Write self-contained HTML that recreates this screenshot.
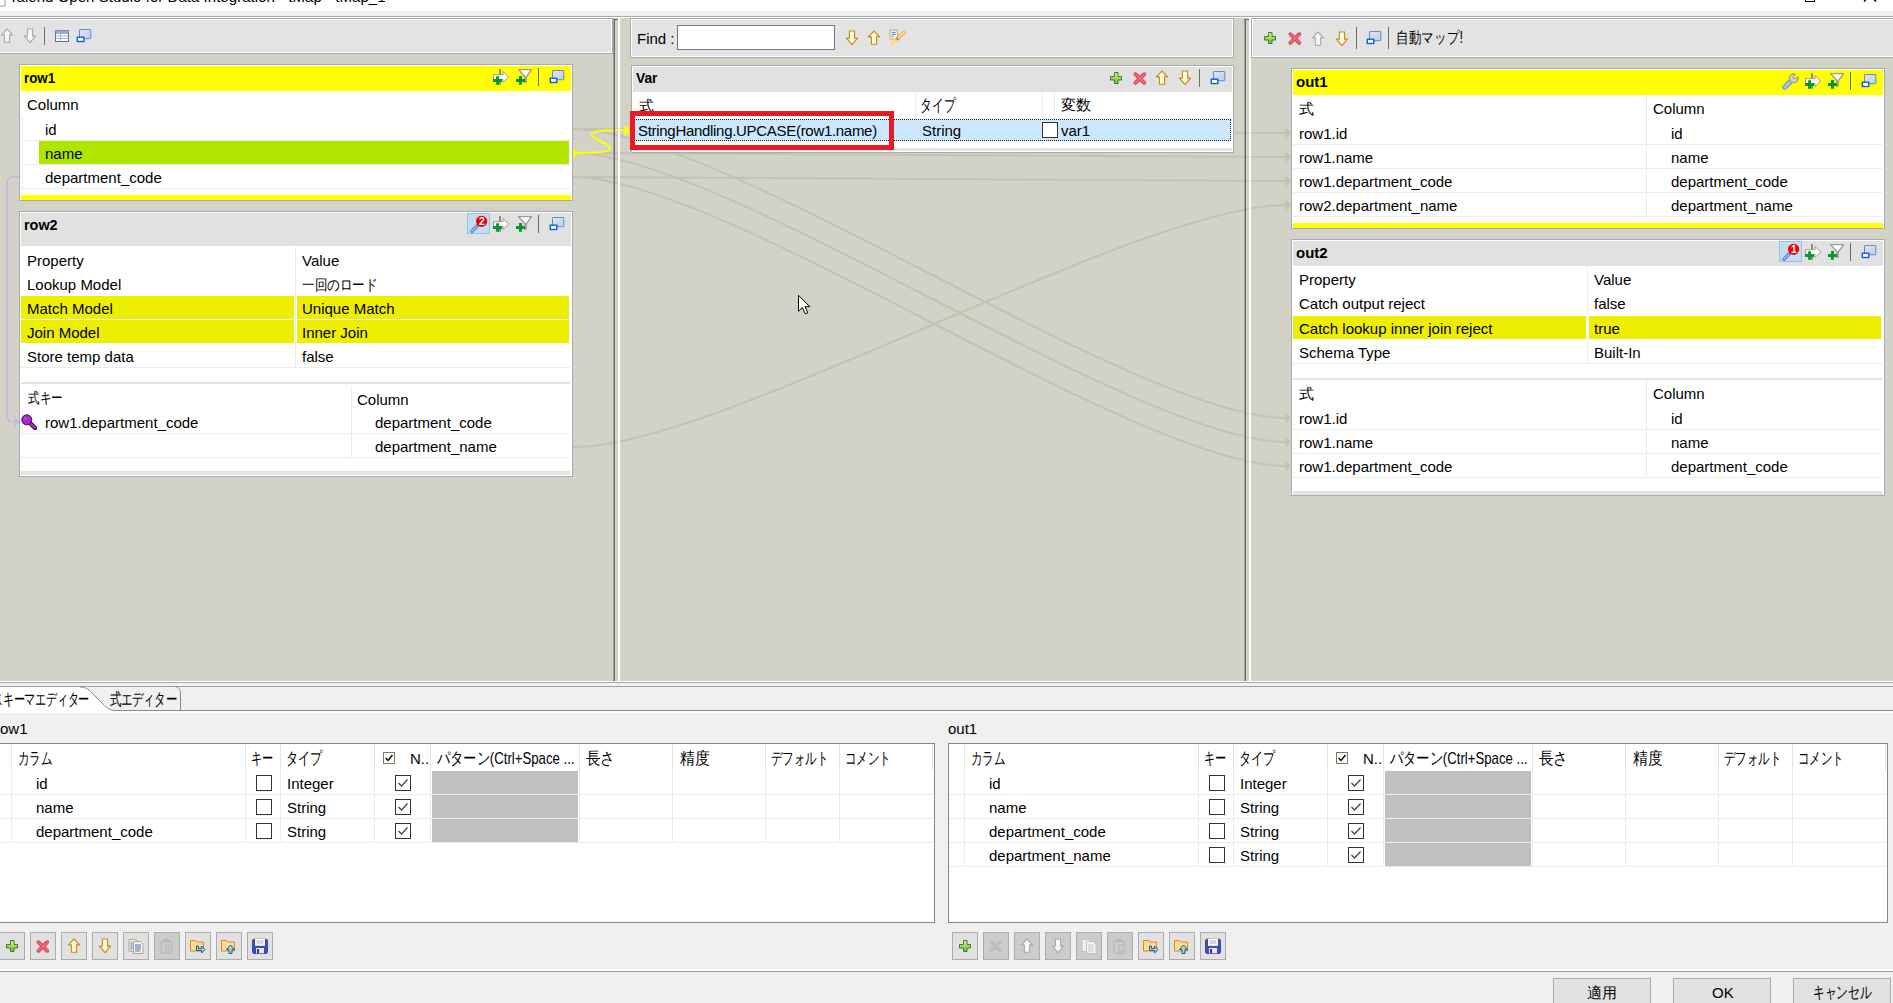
<!DOCTYPE html>
<html><head><meta charset="utf-8"><title>tMap</title>
<style>
html,body{margin:0;padding:0;}
body{width:1893px;height:1003px;overflow:hidden;position:relative;background:#f0f0f0;font-family:"Liberation Sans",sans-serif;}
.a{position:absolute;}
.t{position:absolute;white-space:nowrap;font-size:15px;line-height:24px;font-family:"Liberation Sans",sans-serif;}
svg.a{overflow:visible;}
</style></head><body>
<svg width="0" height="0" style="position:absolute"><defs><linearGradient id="gm" x1="0" y1="0" x2="1" y2="1"><stop offset="0" stop-color="#e6e6e6"/><stop offset="1" stop-color="#bcd0e8"/></linearGradient><linearGradient id="gp" x1="0" y1="0" x2="0" y2="1"><stop offset="0" stop-color="#eef070"/><stop offset="1" stop-color="#7cb640"/></linearGradient><linearGradient id="ga" x1="0" y1="0" x2="1" y2="0"><stop offset="0" stop-color="#fff6d0"/><stop offset="0.5" stop-color="#fffbe8"/><stop offset="1" stop-color="#f8dc90"/></linearGradient></defs></svg>
<div class="a" style="left:0px;top:0px;width:1893px;height:11px;background:#fff;"></div>
<div class="t" style="left:9px;top:-15px;color:#000;letter-spacing:0.04px;">Talend Open Studio for Data Integration - tMap - tMap_1</div>
<svg class="a" style="left:0px;top:0px" width="6" height="7" viewBox="0 0 6 7"><rect x="-2" y="-4" width="7" height="10" fill="#fff" stroke="#8aa0c8"/></svg>
<div class="a" style="left:1805px;top:-9px;width:8px;height:9px;background:transparent;border:1.5px solid #000;"></div>
<svg class="a" style="left:1862px;top:0px" width="16" height="6" viewBox="0 0 16 6"><path d="M2 -10.5 L14 1.5 M14 -10.5 L2 1.5" stroke="#000" stroke-width="1.4"/></svg>
<div class="a" style="left:0px;top:16px;width:1893px;height:1px;background:#a9abb0;"></div>
<div class="a" style="left:0px;top:17px;width:1893px;height:1px;background:#fff;"></div>
<div class="a" style="left:0px;top:18px;width:1893px;height:663px;background:#d2d2c6;"></div>
<svg class="a" style="left:0;top:0" width="1893" height="681" viewBox="0 0 1893 681"><path d="M573 129 C723 129 1136 133 1286 133" fill="none" stroke="#c3c3b4" stroke-width="2"/><path d="M1285.5 127.5 L1291.5 133 L1285.5 138.5 z" fill="#c3c3b4"/><path d="M573 153 C723 153 1136 157 1286 157" fill="none" stroke="#c3c3b4" stroke-width="2"/><path d="M1285.5 151.5 L1291.5 157 L1285.5 162.5 z" fill="#c3c3b4"/><path d="M573 177 C723 177 1136 181 1286 181" fill="none" stroke="#c3c3b4" stroke-width="2"/><path d="M1285.5 175.5 L1291.5 181 L1285.5 186.5 z" fill="#c3c3b4"/><path d="M573 129 C723 129 1136 418 1286 418" fill="none" stroke="#c3c3b4" stroke-width="2"/><path d="M1285.5 412.5 L1291.5 418 L1285.5 423.5 z" fill="#c3c3b4"/><path d="M573 153 C723 153 1136 442 1286 442" fill="none" stroke="#c3c3b4" stroke-width="2"/><path d="M1285.5 436.5 L1291.5 442 L1285.5 447.5 z" fill="#c3c3b4"/><path d="M573 177 C723 177 1136 466 1286 466" fill="none" stroke="#c3c3b4" stroke-width="2"/><path d="M1285.5 460.5 L1291.5 466 L1285.5 471.5 z" fill="#c3c3b4"/><path d="M573 447 C723 447 1136 205 1286 205" fill="none" stroke="#c3c3b4" stroke-width="2"/><path d="M1285.5 199.5 L1291.5 205 L1285.5 210.5 z" fill="#c3c3b4"/><path d="M577 153 C668 153 534 130 625 130" fill="none" stroke="#ffff00" stroke-width="2"/><path d="M624.5 125 L631 130.5 L624.5 136 z" fill="#ffff00"/><path d="M572.5 147.5 L578.8 153 L572.5 158.5 z" fill="#ffff00"/><path d="M19 177 H13.5 Q7 177 7 183.5 V415.5 Q7 422 13.5 422 H15" fill="none" stroke="#c8b8e4" stroke-width="2"/><path d="M14 416 L19.5 422 L14 428 z" fill="#c8b8e4"/></svg>
<div class="a" style="left:-2px;top:18px;width:613px;height:34px;border:1px solid #a9abb0;background:#e3e3e3;box-shadow:inset 0 0 0 1px #fff;"></div>
<div class="a" style="left:613px;top:18px;width:1px;height:663px;background:#a0a0a0;"></div>
<div class="a" style="left:614px;top:19px;width:1px;height:662px;background:#696969;"></div>
<div class="a" style="left:614px;top:19px;width:5px;height:1px;background:#696969;"></div>
<div class="a" style="left:618px;top:18px;width:2px;height:663px;background:#fff;"></div>
<div class="a" style="left:630px;top:18px;width:602px;height:38px;border:1px solid #a9abb0;background:#e3e3e3;box-shadow:inset 0 0 0 1px #fff;"></div>
<div class="a" style="left:1244px;top:18px;width:1px;height:663px;background:#a0a0a0;"></div>
<div class="a" style="left:1245px;top:19px;width:1px;height:662px;background:#696969;"></div>
<div class="a" style="left:1245px;top:19px;width:5px;height:1px;background:#696969;"></div>
<div class="a" style="left:1249px;top:18px;width:2px;height:663px;background:#fff;"></div>
<div class="a" style="left:1251px;top:18px;width:648px;height:38px;border:1px solid #a9abb0;background:#e3e3e3;box-shadow:inset 0 0 0 1px #fff;"></div>
<svg class="a" style="left:0px;top:28px" width="14" height="16" viewBox="0 0 14 16"><path d="M7 1 L12.6 6.9 H9.6 V14.3 H4.4 V6.9 H1.4 Z" fill="#f6f6f6" stroke="#a9a9a9" stroke-width="1.1" stroke-linejoin="round"/></svg>
<svg class="a" style="left:23px;top:28px" width="14" height="16" viewBox="0 0 14 16"><path d="M7 14.6 L12.6 8.1 H9.6 V1 H4.4 V8.1 H1.4 Z" fill="#f6f6f6" stroke="#a9a9a9" stroke-width="1.1" stroke-linejoin="round"/></svg>
<div class="a" style="left:44px;top:27px;width:1px;height:18px;background:#707070;"></div>
<svg class="a" style="left:55px;top:30px" width="14" height="12" viewBox="0 0 14 12"><rect x="0.5" y="0.5" width="13" height="11" fill="#fff" stroke="#5a6fa0"/><path d="M0.5 3.5 h13 M0.5 6 h13 M0.5 8.5 h13 M5.5 0.5 v11" stroke="#8ea0c8" stroke-width="0.8"/><rect x="0.5" y="0.5" width="13" height="2.5" fill="#9aaad0"/></svg>
<svg class="a" style="left:76px;top:28px" width="16" height="15" viewBox="0 0 16 15"><rect x="3.5" y="1.5" width="11.3" height="9.2" rx="0.6" fill="url(#gm)" stroke="#5b8bd9" stroke-width="1"/><rect x="1.3" y="9.2" width="6.5" height="4.3" fill="#fff" stroke="#0a5ee0" stroke-width="1.4"/></svg>
<div class="t" style="left:637px;top:27px;color:#000;">Find :</div>
<div class="a" style="left:677px;top:25px;width:158px;height:25px;background:#fff;box-sizing:border-box;border:1px solid #7a7a7a;"></div>
<svg class="a" style="left:845px;top:30px" width="14" height="16" viewBox="0 0 14 16"><path d="M7 14.6 L12.6 8.1 H9.6 V1 H4.4 V8.1 H1.4 Z" fill="url(#ga)" stroke="#c98a12" stroke-width="1.1" stroke-linejoin="round"/></svg>
<svg class="a" style="left:867px;top:30px" width="14" height="16" viewBox="0 0 14 16"><path d="M7 1 L12.6 6.9 H9.6 V14.3 H4.4 V6.9 H1.4 Z" fill="url(#ga)" stroke="#c98a12" stroke-width="1.1" stroke-linejoin="round"/></svg>
<svg class="a" style="left:889px;top:29px" width="17" height="17" viewBox="0 0 17 17"><rect x="1" y="1" width="7.5" height="9" fill="#f4f6fc" stroke="#b8ac78" stroke-width="1"/><path d="M2.6 3.4 h4 M2.6 5.4 h4 M2.6 7.4 h2" stroke="#5a78b8" stroke-width="1"/><path d="M2 15.5 L7.5 10.5" stroke="#f8e070" stroke-width="3.6" stroke-linecap="butt"/><path d="M7.5 10.5 L9.8 8.4" stroke="#9a8c88" stroke-width="3.6"/><path d="M9.8 8.4 L15 3.6" stroke="#f4b040" stroke-width="3.6" stroke-linecap="round"/><path d="M9.8 8.4 L15 3.6" stroke="#ffe8a0" stroke-width="1.4" stroke-linecap="round"/></svg>
<svg class="a" style="left:1264px;top:32px" width="13" height="13" viewBox="0 0 13 13"><path d="M4.5 0.5 H8 V4.5 H11.5 V8 H8 V11.5 H4.5 V8 H0.5 V4.5 H4.5 Z" fill="url(#gp)" stroke="#2f8040" stroke-width="1"/></svg>
<svg class="a" style="left:1288px;top:32px" width="14" height="13" viewBox="0 0 14 13"><path d="M2.4 2.2 L11.2 10.8 M11.2 2.2 L2.4 10.8" stroke="#d8404e" stroke-width="3.8" stroke-linecap="round"/><path d="M2.4 2.2 L11.2 10.8 M11.2 2.2 L2.4 10.8" stroke="#f26874" stroke-width="2" stroke-linecap="round"/></svg>
<svg class="a" style="left:1311px;top:31px" width="14" height="16" viewBox="0 0 14 16"><path d="M7 1 L12.6 6.9 H9.6 V14.3 H4.4 V6.9 H1.4 Z" fill="#f6f6f6" stroke="#a9a9a9" stroke-width="1.1" stroke-linejoin="round"/></svg>
<svg class="a" style="left:1335px;top:31px" width="14" height="16" viewBox="0 0 14 16"><path d="M7 14.6 L12.6 8.1 H9.6 V1 H4.4 V8.1 H1.4 Z" fill="url(#ga)" stroke="#c98a12" stroke-width="1.1" stroke-linejoin="round"/></svg>
<div class="a" style="left:1356px;top:27px;width:1px;height:22px;background:#6a6a6a;"></div>
<svg class="a" style="left:1366px;top:30px" width="16" height="15" viewBox="0 0 16 15"><rect x="3.5" y="1.5" width="11.3" height="9.2" rx="0.6" fill="url(#gm)" stroke="#5b8bd9" stroke-width="1"/><rect x="1.3" y="9.2" width="6.5" height="4.3" fill="#fff" stroke="#0a5ee0" stroke-width="1.4"/></svg>
<div class="a" style="left:1388px;top:27px;width:1px;height:22px;background:#6a6a6a;"></div>
<div class="t" style="left:1396px;top:26px;color:#000;transform:scale(0.845,1.08);transform-origin:0 18px;">自動マップ!</div>
<div class="a" style="left:19px;top:64px;width:552px;height:135px;border:1px solid #a9abb0;background:#fff;box-shadow:inset 0 0 0 1px #fff;"></div>
<div class="a" style="left:21px;top:66px;width:550px;height:25px;background:#ffff00;"></div>
<div class="t" style="left:24px;top:66px;font-weight:bold;color:#000;transform:scale(0.89,1);transform-origin:0 18px;">row1</div>
<svg class="a" style="left:492px;top:68px" width="18" height="18" viewBox="0 0 18 18"><rect x="7" y="1" width="2" height="15.5" fill="#8c8c8c"/><path d="M1.5 6.7 H11 V3.5 L16.8 9 L11 14.5 V11.5 H1.5 Z" fill="#fff" stroke="#a39c82" stroke-width="1"/><rect x="7" y="12" width="2" height="4.5" fill="#8c8c8c"/><path d="M4.1 8.2 H7 V11.1 H10 V14 H7 V16.8 H4.1 V14 H1 V11.1 H4.1 Z" fill="#07962f"/></svg>
<svg class="a" style="left:515px;top:68px" width="18" height="18" viewBox="0 0 18 18"><path d="M3.6 1.6 H16.6 L11.2 9 V14.4 H10.1 V9 Z" fill="#fff" stroke="#9a9a9a" stroke-width="1.3" stroke-linejoin="round"/><path d="M4 8.1 H7 V11.1 H10 V14 H7 V16.8 H4 V14 H1 V11.1 H4 Z" fill="#07962f"/></svg>
<div class="a" style="left:538px;top:68px;width:1px;height:18px;background:#6c6c3c;"></div>
<svg class="a" style="left:549px;top:69px" width="16" height="15" viewBox="0 0 16 15"><rect x="3.5" y="1.5" width="11.3" height="9.2" rx="0.6" fill="url(#gm)" stroke="#5b8bd9" stroke-width="1"/><rect x="1.3" y="9.2" width="6.5" height="4.3" fill="#fff" stroke="#0a5ee0" stroke-width="1.4"/></svg>
<div class="t" style="left:27px;top:93px;color:#000;">Column</div>
<div class="a" style="left:22px;top:117px;width:1px;height:72px;background:#e6eef8;"></div>
<div class="a" style="left:21px;top:140px;width:549px;height:1px;background:#ececec;"></div>
<div class="t" style="left:45px;top:118px;color:#000;">id</div>
<div class="a" style="left:39px;top:141px;width:530px;height:23px;background:#aee600;"></div>
<div class="a" style="left:21px;top:164px;width:549px;height:1px;background:#ececec;"></div>
<div class="t" style="left:45px;top:142px;color:#000;">name</div>
<div class="a" style="left:21px;top:188px;width:549px;height:1px;background:#ececec;"></div>
<div class="t" style="left:45px;top:166px;color:#000;">department_code</div>
<div class="a" style="left:21px;top:195px;width:550px;height:5px;background:#ffff00;"></div>
<div class="a" style="left:19px;top:211px;width:552px;height:264px;border:1px solid #a9abb0;background:#fff;box-shadow:inset 0 0 0 1px #fff;"></div>
<div class="a" style="left:21px;top:213px;width:550px;height:33px;background:#e1e1e1;"></div>
<div class="t" style="left:24px;top:213px;font-weight:bold;color:#000;transform:scale(0.96,1);transform-origin:0 18px;">row2</div>
<svg class="a" style="left:467px;top:213px" width="23" height="21" viewBox="0 0 23 21"><rect x="0.5" y="0.5" width="22" height="20" fill="#c5dcf0" stroke="#8cc4f2"/><path d="M5 6 v8 M9 5 v9" stroke="#b8d0e4" stroke-width="1" stroke-dasharray="1 1"/><path d="M5 18.2 L10.5 12.5" stroke="#5d84d6" stroke-width="3.4" stroke-linecap="round"/><path d="M5 18.2 L10.5 12.5" stroke="#a9c2ee" stroke-width="1.2" stroke-dasharray="1 1" stroke-linecap="round"/><circle cx="14.6" cy="8.3" r="5.6" fill="#f00000"/><text x="14.8" y="12.2" font-family="Liberation Sans" font-weight="bold" font-size="10.5" fill="#fff" text-anchor="middle">2</text></svg>
<svg class="a" style="left:492px;top:215px" width="18" height="18" viewBox="0 0 18 18"><rect x="7" y="1" width="2" height="15.5" fill="#8c8c8c"/><path d="M1.5 6.7 H11 V3.5 L16.8 9 L11 14.5 V11.5 H1.5 Z" fill="#fff" stroke="#a39c82" stroke-width="1"/><rect x="7" y="12" width="2" height="4.5" fill="#8c8c8c"/><path d="M4.1 8.2 H7 V11.1 H10 V14 H7 V16.8 H4.1 V14 H1 V11.1 H4.1 Z" fill="#07962f"/></svg>
<svg class="a" style="left:515px;top:215px" width="18" height="18" viewBox="0 0 18 18"><path d="M3.6 1.6 H16.6 L11.2 9 V14.4 H10.1 V9 Z" fill="#fff" stroke="#9a9a9a" stroke-width="1.3" stroke-linejoin="round"/><path d="M4 8.1 H7 V11.1 H10 V14 H7 V16.8 H4 V14 H1 V11.1 H4 Z" fill="#07962f"/></svg>
<div class="a" style="left:538px;top:215px;width:1px;height:18px;background:#6a6a6a;"></div>
<svg class="a" style="left:549px;top:216px" width="16" height="15" viewBox="0 0 16 15"><rect x="3.5" y="1.5" width="11.3" height="9.2" rx="0.6" fill="url(#gm)" stroke="#5b8bd9" stroke-width="1"/><rect x="1.3" y="9.2" width="6.5" height="4.3" fill="#fff" stroke="#0a5ee0" stroke-width="1.4"/></svg>
<div class="a" style="left:295px;top:247px;width:1px;height:24px;background:#ececec;"></div>
<div class="t" style="left:27px;top:249px;color:#000;">Property</div>
<div class="t" style="left:302px;top:249px;color:#000;">Value</div>
<div class="a" style="left:295px;top:271px;width:1px;height:24px;background:#e6eef8;"></div>
<div class="t" style="left:27px;top:273px;color:#000;">Lookup Model</div>
<div class="t" style="left:302px;top:273px;color:#000;transform:scale(0.84,1);transform-origin:0 18px;">一回のロード</div>
<div class="a" style="left:21px;top:296px;width:273px;height:23px;background:#eeee00;"></div>
<div class="a" style="left:297px;top:296px;width:272px;height:23px;background:#eeee00;"></div>
<div class="t" style="left:27px;top:297px;color:#000;">Match Model</div>
<div class="t" style="left:302px;top:297px;color:#000;">Unique Match</div>
<div class="a" style="left:21px;top:320px;width:273px;height:23px;background:#eeee00;"></div>
<div class="a" style="left:297px;top:320px;width:272px;height:23px;background:#eeee00;"></div>
<div class="t" style="left:27px;top:321px;color:#000;">Join Model</div>
<div class="t" style="left:302px;top:321px;color:#000;">Inner Join</div>
<div class="a" style="left:295px;top:343px;width:1px;height:24px;background:#e6eef8;"></div>
<div class="t" style="left:27px;top:345px;color:#000;">Store temp data</div>
<div class="t" style="left:302px;top:345px;color:#000;">false</div>
<div class="a" style="left:21px;top:367px;width:549px;height:1px;background:#ececec;"></div>
<div class="a" style="left:295px;top:296px;width:1px;height:47px;background:#e6eef8;"></div>
<div class="a" style="left:21px;top:319px;width:549px;height:1px;background:#ececec;"></div>
<div class="a" style="left:21px;top:382px;width:549px;height:2px;background:#e3e3e3;"></div>
<div class="t" style="left:28px;top:386px;color:#000;transform:scale(0.77,1.0);transform-origin:0 18px;">式キー</div>
<div class="t" style="left:357px;top:388px;color:#000;">Column</div>
<div class="a" style="left:351px;top:386px;width:1px;height:23px;background:#ececec;"></div>
<div class="a" style="left:22px;top:410px;width:1px;height:23px;background:#e6eef8;"></div>
<div class="a" style="left:351px;top:410px;width:1px;height:47px;background:#e6eef8;"></div>
<svg class="a" style="left:21px;top:414px" width="17" height="17" viewBox="0 0 17 17"><path d="M6.5 6.5 L14 14" stroke="#401038" stroke-width="4.4" stroke-linecap="round"/><path d="M6.5 6.5 L14 14" stroke="#a82ad0" stroke-width="2.4" stroke-linecap="round"/><circle cx="5.8" cy="5.8" r="5" fill="#a82ad0" stroke="#401038" stroke-width="1"/><circle cx="4.5" cy="4.5" r="1" fill="#e070a0"/></svg>
<div class="t" style="left:45px;top:411px;color:#000;">row1.department_code</div>
<div class="t" style="left:375px;top:411px;color:#000;">department_code</div>
<div class="a" style="left:21px;top:433px;width:549px;height:1px;background:#ececec;"></div>
<div class="t" style="left:375px;top:435px;color:#000;">department_name</div>
<div class="a" style="left:21px;top:457px;width:549px;height:1px;background:#ececec;"></div>
<div class="a" style="left:21px;top:471px;width:549px;height:4px;background:#e3e3e3;"></div>
<div class="a" style="left:631px;top:65px;width:601px;height:86px;border:1px solid #a9abb0;background:#fff;box-shadow:inset 0 0 0 1px #fff;"></div>
<div class="a" style="left:633px;top:67px;width:599px;height:25px;background:#e1e1e1;"></div>
<div class="t" style="left:636px;top:66px;font-weight:bold;color:#000;transform:scale(0.92,1);transform-origin:0 18px;">Var</div>
<svg class="a" style="left:1110px;top:72px" width="13" height="13" viewBox="0 0 13 13"><path d="M4.5 0.5 H8 V4.5 H11.5 V8 H8 V11.5 H4.5 V8 H0.5 V4.5 H4.5 Z" fill="url(#gp)" stroke="#2f8040" stroke-width="1"/></svg>
<svg class="a" style="left:1133px;top:72px" width="14" height="13" viewBox="0 0 14 13"><path d="M2.4 2.2 L11.2 10.8 M11.2 2.2 L2.4 10.8" stroke="#d8404e" stroke-width="3.8" stroke-linecap="round"/><path d="M2.4 2.2 L11.2 10.8 M11.2 2.2 L2.4 10.8" stroke="#f26874" stroke-width="2" stroke-linecap="round"/></svg>
<svg class="a" style="left:1155px;top:70px" width="14" height="16" viewBox="0 0 14 16"><path d="M7 1 L12.6 6.9 H9.6 V14.3 H4.4 V6.9 H1.4 Z" fill="url(#ga)" stroke="#c98a12" stroke-width="1.1" stroke-linejoin="round"/></svg>
<svg class="a" style="left:1178px;top:70px" width="14" height="16" viewBox="0 0 14 16"><path d="M7 14.6 L12.6 8.1 H9.6 V1 H4.4 V8.1 H1.4 Z" fill="url(#ga)" stroke="#c98a12" stroke-width="1.1" stroke-linejoin="round"/></svg>
<div class="a" style="left:1199px;top:69px;width:1px;height:18px;background:#6a6a6a;"></div>
<svg class="a" style="left:1210px;top:70px" width="16" height="15" viewBox="0 0 16 15"><rect x="3.5" y="1.5" width="11.3" height="9.2" rx="0.6" fill="url(#gm)" stroke="#5b8bd9" stroke-width="1"/><rect x="1.3" y="9.2" width="6.5" height="4.3" fill="#fff" stroke="#0a5ee0" stroke-width="1.4"/></svg>
<div class="t" style="left:639px;top:94px;color:#000;">式</div>
<div class="t" style="left:920px;top:94px;color:#000;transform:scale(0.8,1.15);transform-origin:0 18px;">タイプ</div>
<div class="t" style="left:1061px;top:93px;color:#000;">変数</div>
<div class="a" style="left:915px;top:92px;width:1px;height:27px;background:#ececec;"></div>
<div class="a" style="left:1042px;top:92px;width:1px;height:27px;background:#ececec;"></div>
<div class="a" style="left:1054px;top:92px;width:1px;height:27px;background:#ececec;"></div>
<div class="a" style="left:633px;top:119px;width:598px;height:22px;background:#cce8ff;"></div>
<div class="a" style="left:633px;top:119px;width:598px;height:22px;background:transparent;box-sizing:border-box;border:1px dotted #222;"></div>
<div class="a" style="left:915px;top:120px;width:1px;height:20px;background:#d8e8f8;"></div>
<svg class="a" style="left:1042px;top:122px" width="16" height="16" viewBox="0 0 16 16"><rect x="0.5" y="0.5" width="15" height="15" fill="#fff" stroke="#333" stroke-width="1"/></svg>
<div class="t" style="left:638px;top:119px;color:#000;letter-spacing:-0.3px;">StringHandling.UPCASE(row1.name)</div>
<div class="t" style="left:922px;top:119px;color:#000;">String</div>
<div class="t" style="left:1061px;top:119px;color:#000;">var1</div>
<div class="a" style="left:633px;top:148px;width:599px;height:3px;background:#e3e3e3;"></div>
<div class="a" style="left:630px;top:111px;width:264px;height:39px;background:transparent;box-sizing:border-box;border:5px solid #e81b24;"></div>
<div class="a" style="left:1291px;top:68px;width:592px;height:159px;border:1px solid #a9abb0;background:#fff;box-shadow:inset 0 0 0 1px #fff;"></div>
<div class="a" style="left:1293px;top:70px;width:590px;height:25px;background:#ffff00;"></div>
<div class="t" style="left:1296px;top:70px;font-weight:bold;color:#000;">out1</div>
<svg class="a" style="left:1782px;top:73px" width="17" height="17" viewBox="0 0 17 17"><path d="M2.8 14.2 L8.6 8.4" stroke="#6a8fd4" stroke-width="5" stroke-linecap="round"/><path d="M2.8 14.2 L8.6 8.4" stroke="#a9c3ee" stroke-width="3" stroke-linecap="round"/><path d="M8.4 9.2 L7.6 6.2 A4.2 4.2 0 0 1 13.4 1.2 L11.2 3.6 L11.6 5.4 L13.4 5.8 L15.8 3.6 A4.2 4.2 0 0 1 10.8 9.4 Z" fill="#d2d2d2" stroke="#8c8c8c" stroke-width="1"/></svg>
<svg class="a" style="left:1804px;top:72px" width="18" height="18" viewBox="0 0 18 18"><rect x="7" y="1" width="2" height="15.5" fill="#8c8c8c"/><path d="M1.5 6.7 H11 V3.5 L16.8 9 L11 14.5 V11.5 H1.5 Z" fill="#fff" stroke="#a39c82" stroke-width="1"/><rect x="7" y="12" width="2" height="4.5" fill="#8c8c8c"/><path d="M4.1 8.2 H7 V11.1 H10 V14 H7 V16.8 H4.1 V14 H1 V11.1 H4.1 Z" fill="#07962f"/></svg>
<svg class="a" style="left:1827px;top:72px" width="18" height="18" viewBox="0 0 18 18"><path d="M3.6 1.6 H16.6 L11.2 9 V14.4 H10.1 V9 Z" fill="#fff" stroke="#9a9a9a" stroke-width="1.3" stroke-linejoin="round"/><path d="M4 8.1 H7 V11.1 H10 V14 H7 V16.8 H4 V14 H1 V11.1 H4 Z" fill="#07962f"/></svg>
<div class="a" style="left:1850px;top:72px;width:1px;height:18px;background:#6c6c3c;"></div>
<svg class="a" style="left:1861px;top:73px" width="16" height="15" viewBox="0 0 16 15"><rect x="3.5" y="1.5" width="11.3" height="9.2" rx="0.6" fill="url(#gm)" stroke="#5b8bd9" stroke-width="1"/><rect x="1.3" y="9.2" width="6.5" height="4.3" fill="#fff" stroke="#0a5ee0" stroke-width="1.4"/></svg>
<div class="t" style="left:1299px;top:97px;color:#000;">式</div>
<div class="t" style="left:1653px;top:97px;color:#000;">Column</div>
<div class="a" style="left:1646px;top:95px;width:1px;height:25px;background:#ececec;"></div>
<div class="t" style="left:1299px;top:122px;color:#000;">row1.id</div>
<div class="t" style="left:1671px;top:122px;color:#000;">id</div>
<div class="a" style="left:1646px;top:120px;width:1px;height:24px;background:#e6eef8;"></div>
<div class="a" style="left:1293px;top:144px;width:589px;height:1px;background:#ececec;"></div>
<div class="t" style="left:1299px;top:146px;color:#000;">row1.name</div>
<div class="t" style="left:1671px;top:146px;color:#000;">name</div>
<div class="a" style="left:1646px;top:144px;width:1px;height:24px;background:#e6eef8;"></div>
<div class="a" style="left:1293px;top:168px;width:589px;height:1px;background:#ececec;"></div>
<div class="t" style="left:1299px;top:170px;color:#000;">row1.department_code</div>
<div class="t" style="left:1671px;top:170px;color:#000;">department_code</div>
<div class="a" style="left:1646px;top:168px;width:1px;height:24px;background:#e6eef8;"></div>
<div class="a" style="left:1293px;top:192px;width:589px;height:1px;background:#ececec;"></div>
<div class="t" style="left:1299px;top:194px;color:#000;">row2.department_name</div>
<div class="t" style="left:1671px;top:194px;color:#000;">department_name</div>
<div class="a" style="left:1646px;top:192px;width:1px;height:24px;background:#e6eef8;"></div>
<div class="a" style="left:1293px;top:216px;width:589px;height:1px;background:#ececec;"></div>
<div class="a" style="left:1293px;top:223px;width:590px;height:5px;background:#ffff00;"></div>
<div class="a" style="left:1291px;top:239px;width:592px;height:255px;border:1px solid #a9abb0;background:#fff;box-shadow:inset 0 0 0 1px #fff;"></div>
<div class="a" style="left:1293px;top:241px;width:590px;height:25px;background:#e1e1e1;"></div>
<div class="t" style="left:1296px;top:241px;font-weight:bold;color:#000;">out2</div>
<svg class="a" style="left:1779px;top:241px" width="23" height="21" viewBox="0 0 23 21"><rect x="0.5" y="0.5" width="22" height="20" fill="#c5dcf0" stroke="#8cc4f2"/><path d="M5 6 v8 M9 5 v9" stroke="#b8d0e4" stroke-width="1" stroke-dasharray="1 1"/><path d="M5 18.2 L10.5 12.5" stroke="#5d84d6" stroke-width="3.4" stroke-linecap="round"/><path d="M5 18.2 L10.5 12.5" stroke="#a9c2ee" stroke-width="1.2" stroke-dasharray="1 1" stroke-linecap="round"/><circle cx="14.6" cy="8.3" r="5.6" fill="#f00000"/><text x="14.8" y="12.2" font-family="Liberation Sans" font-weight="bold" font-size="10.5" fill="#fff" text-anchor="middle">1</text></svg>
<svg class="a" style="left:1804px;top:243px" width="18" height="18" viewBox="0 0 18 18"><rect x="7" y="1" width="2" height="15.5" fill="#8c8c8c"/><path d="M1.5 6.7 H11 V3.5 L16.8 9 L11 14.5 V11.5 H1.5 Z" fill="#fff" stroke="#a39c82" stroke-width="1"/><rect x="7" y="12" width="2" height="4.5" fill="#8c8c8c"/><path d="M4.1 8.2 H7 V11.1 H10 V14 H7 V16.8 H4.1 V14 H1 V11.1 H4.1 Z" fill="#07962f"/></svg>
<svg class="a" style="left:1827px;top:243px" width="18" height="18" viewBox="0 0 18 18"><path d="M3.6 1.6 H16.6 L11.2 9 V14.4 H10.1 V9 Z" fill="#fff" stroke="#9a9a9a" stroke-width="1.3" stroke-linejoin="round"/><path d="M4 8.1 H7 V11.1 H10 V14 H7 V16.8 H4 V14 H1 V11.1 H4 Z" fill="#07962f"/></svg>
<div class="a" style="left:1850px;top:243px;width:1px;height:18px;background:#6a6a6a;"></div>
<svg class="a" style="left:1861px;top:244px" width="16" height="15" viewBox="0 0 16 15"><rect x="3.5" y="1.5" width="11.3" height="9.2" rx="0.6" fill="url(#gm)" stroke="#5b8bd9" stroke-width="1"/><rect x="1.3" y="9.2" width="6.5" height="4.3" fill="#fff" stroke="#0a5ee0" stroke-width="1.4"/></svg>
<div class="a" style="left:1587px;top:266px;width:1px;height:25px;background:#ececec;"></div>
<div class="t" style="left:1299px;top:268px;color:#000;">Property</div>
<div class="t" style="left:1594px;top:268px;color:#000;">Value</div>
<div class="a" style="left:1587px;top:290px;width:1px;height:24px;background:#e6eef8;"></div>
<div class="t" style="left:1299px;top:292px;color:#000;">Catch output reject</div>
<div class="t" style="left:1594px;top:292px;color:#000;">false</div>
<div class="a" style="left:1293px;top:316px;width:293px;height:23px;background:#eeee00;"></div>
<div class="a" style="left:1589px;top:316px;width:292px;height:23px;background:#eeee00;"></div>
<div class="t" style="left:1299px;top:317px;color:#000;">Catch lookup inner join reject</div>
<div class="t" style="left:1594px;top:317px;color:#000;">true</div>
<div class="a" style="left:1587px;top:339px;width:1px;height:24px;background:#e6eef8;"></div>
<div class="t" style="left:1299px;top:341px;color:#000;">Schema Type</div>
<div class="t" style="left:1594px;top:341px;color:#000;">Built-In</div>
<div class="a" style="left:1293px;top:363px;width:589px;height:1px;background:#ececec;"></div>
<div class="a" style="left:1293px;top:378px;width:589px;height:2px;background:#e3e3e3;"></div>
<div class="t" style="left:1299px;top:382px;color:#000;">式</div>
<div class="t" style="left:1653px;top:382px;color:#000;">Column</div>
<div class="a" style="left:1646px;top:380px;width:1px;height:25px;background:#ececec;"></div>
<div class="t" style="left:1299px;top:407px;color:#000;">row1.id</div>
<div class="t" style="left:1671px;top:407px;color:#000;">id</div>
<div class="a" style="left:1646px;top:405px;width:1px;height:24px;background:#e6eef8;"></div>
<div class="a" style="left:1293px;top:429px;width:589px;height:1px;background:#ececec;"></div>
<div class="t" style="left:1299px;top:431px;color:#000;">row1.name</div>
<div class="t" style="left:1671px;top:431px;color:#000;">name</div>
<div class="a" style="left:1646px;top:429px;width:1px;height:24px;background:#e6eef8;"></div>
<div class="a" style="left:1293px;top:453px;width:589px;height:1px;background:#ececec;"></div>
<div class="t" style="left:1299px;top:455px;color:#000;">row1.department_code</div>
<div class="t" style="left:1671px;top:455px;color:#000;">department_code</div>
<div class="a" style="left:1646px;top:453px;width:1px;height:24px;background:#e6eef8;"></div>
<div class="a" style="left:1293px;top:477px;width:589px;height:1px;background:#ececec;"></div>
<div class="a" style="left:1293px;top:491px;width:589px;height:4px;background:#e3e3e3;"></div>
<svg class="a" style="left:797px;top:294px" width="16" height="22" viewBox="0 0 16 22"><path d="M1.5 1.3 V17.3 L5.3 13.6 L8.3 19.8 L10.8 18.8 L8.1 12.7 H12.8 Z" fill="#fff" stroke="#000" stroke-width="1" stroke-linejoin="round"/></svg>
<div class="a" style="left:0px;top:681px;width:1893px;height:1px;background:#fff;"></div>
<div class="a" style="left:0px;top:682px;width:1893px;height:1px;background:#a9abb0;"></div>
<div class="a" style="left:0px;top:686px;width:1893px;height:1px;background:#a0a0a0;"></div>
<svg class="a" style="left:0px;top:687px" width="200" height="26" viewBox="0 0 200 26"><path d="M-1 0 H80 C85 0 88 2 92 6 L103 17 C107 21 110 23.5 115 23.5 H200 V26 H-1 Z" fill="#fff"/><path d="M80 0 C85 0 88 2 92 6 L103 17 C107 21 110 23.5 115 23.5 H200" fill="none" stroke="#8a8a8a" stroke-width="1"/><path d="M175 -0.5 C178 -0.5 180.5 2 180.5 6 V23.5" fill="none" stroke="#8a8a8a" stroke-width="1"/></svg>
<div class="a" style="left:114px;top:710px;width:1779px;height:1px;background:#8a8a8a;"></div>
<div class="t" style="left:-8px;top:688px;color:#000;transform:scale(0.72,1.1);transform-origin:0 18px;">スキーマエディター</div>
<div class="t" style="left:110px;top:688px;color:#000;transform:scale(0.74,1.1);transform-origin:0 18px;">式エディター</div>
<div class="a" style="left:0px;top:711px;width:1893px;height:2px;background:#fff;"></div>
<div class="t" style="left:-5px;top:717px;color:#000;">row1</div>
<div class="a" style="left:-5px;top:743px;width:940px;height:180px;background:#fff;box-sizing:border-box;border:1px solid #828790;"></div>
<div class="a" style="left:11px;top:744px;width:1px;height:27px;background:#e5e5e5;"></div>
<div class="a" style="left:245px;top:744px;width:1px;height:27px;background:#e5e5e5;"></div>
<div class="a" style="left:280px;top:744px;width:1px;height:27px;background:#e5e5e5;"></div>
<div class="a" style="left:374px;top:744px;width:1px;height:27px;background:#e5e5e5;"></div>
<div class="a" style="left:430px;top:744px;width:1px;height:27px;background:#e5e5e5;"></div>
<div class="a" style="left:579px;top:744px;width:1px;height:27px;background:#e5e5e5;"></div>
<div class="a" style="left:672px;top:744px;width:1px;height:27px;background:#e5e5e5;"></div>
<div class="a" style="left:765px;top:744px;width:1px;height:27px;background:#e5e5e5;"></div>
<div class="a" style="left:839px;top:744px;width:1px;height:27px;background:#e5e5e5;"></div>
<div class="a" style="left:932px;top:744px;width:1px;height:27px;background:#e5e5e5;"></div>
<div class="t" style="left:18px;top:747px;color:#000;transform:scale(0.76,1.12);transform-origin:0 18px;">カラム</div>
<div class="t" style="left:251px;top:747px;color:#000;transform:scale(0.74,1.12);transform-origin:0 18px;">キー</div>
<div class="t" style="left:286px;top:747px;color:#000;transform:scale(0.8,1.12);transform-origin:0 18px;">タイプ</div>
<div class="t" style="left:410px;top:747px;color:#000;">N..</div>
<div class="t" style="left:437px;top:747px;color:#000;transform:scale(0.88,1.12);transform-origin:0 18px;">パターン(Ctrl+Space ...</div>
<div class="t" style="left:586px;top:747px;color:#000;transform:scale(0.96,1.12);transform-origin:0 18px;">長さ</div>
<div class="t" style="left:680px;top:747px;color:#000;transform:scale(0.97,1.12);transform-origin:0 18px;">精度</div>
<div class="t" style="left:771px;top:747px;color:#000;transform:scale(0.76,1.12);transform-origin:0 18px;">デフォルト</div>
<div class="t" style="left:845px;top:747px;color:#000;transform:scale(0.76,1.12);transform-origin:0 18px;">コメント</div>
<svg class="a" style="left:383px;top:752px" width="12" height="12" viewBox="0 0 12 12"><rect x="0.5" y="0.5" width="11" height="11" fill="#fff" stroke="#7c7c60"/><path d="M2.5 6 L5 8.5 L9.5 3" fill="none" stroke="#000" stroke-width="1.3"/></svg>
<div class="a" style="left:11px;top:771px;width:1px;height:23px;background:#e6eef8;"></div>
<div class="a" style="left:245px;top:771px;width:1px;height:23px;background:#e6eef8;"></div>
<div class="a" style="left:280px;top:771px;width:1px;height:23px;background:#e6eef8;"></div>
<div class="a" style="left:374px;top:771px;width:1px;height:23px;background:#e6eef8;"></div>
<div class="a" style="left:430px;top:771px;width:1px;height:23px;background:#e6eef8;"></div>
<div class="a" style="left:579px;top:771px;width:1px;height:23px;background:#e6eef8;"></div>
<div class="a" style="left:672px;top:771px;width:1px;height:23px;background:#e6eef8;"></div>
<div class="a" style="left:765px;top:771px;width:1px;height:23px;background:#e6eef8;"></div>
<div class="a" style="left:839px;top:771px;width:1px;height:23px;background:#e6eef8;"></div>
<div class="a" style="left:432px;top:771px;width:146px;height:23px;background:#c0c0c0;"></div>
<div class="a" style="left:-4px;top:794px;width:937px;height:1px;background:#ececec;"></div>
<div class="t" style="left:36px;top:772px;color:#000;">id</div>
<svg class="a" style="left:256px;top:775px" width="16" height="16" viewBox="0 0 16 16"><rect x="0.5" y="0.5" width="15" height="15" fill="#fff" stroke="#333" stroke-width="1"/></svg>
<div class="t" style="left:287px;top:772px;color:#000;">Integer</div>
<svg class="a" style="left:395px;top:775px" width="16" height="16" viewBox="0 0 16 16"><rect x="0.5" y="0.5" width="15" height="15" fill="#fff" stroke="#333" stroke-width="1"/><path d="M3.5 8.0 L6.5 11.0 L12.5 4.5" fill="none" stroke="#444" stroke-width="1.3"/></svg>
<div class="a" style="left:11px;top:795px;width:1px;height:23px;background:#e6eef8;"></div>
<div class="a" style="left:245px;top:795px;width:1px;height:23px;background:#e6eef8;"></div>
<div class="a" style="left:280px;top:795px;width:1px;height:23px;background:#e6eef8;"></div>
<div class="a" style="left:374px;top:795px;width:1px;height:23px;background:#e6eef8;"></div>
<div class="a" style="left:430px;top:795px;width:1px;height:23px;background:#e6eef8;"></div>
<div class="a" style="left:579px;top:795px;width:1px;height:23px;background:#e6eef8;"></div>
<div class="a" style="left:672px;top:795px;width:1px;height:23px;background:#e6eef8;"></div>
<div class="a" style="left:765px;top:795px;width:1px;height:23px;background:#e6eef8;"></div>
<div class="a" style="left:839px;top:795px;width:1px;height:23px;background:#e6eef8;"></div>
<div class="a" style="left:432px;top:795px;width:146px;height:23px;background:#c0c0c0;"></div>
<div class="a" style="left:-4px;top:818px;width:937px;height:1px;background:#ececec;"></div>
<div class="t" style="left:36px;top:796px;color:#000;">name</div>
<svg class="a" style="left:256px;top:799px" width="16" height="16" viewBox="0 0 16 16"><rect x="0.5" y="0.5" width="15" height="15" fill="#fff" stroke="#333" stroke-width="1"/></svg>
<div class="t" style="left:287px;top:796px;color:#000;">String</div>
<svg class="a" style="left:395px;top:799px" width="16" height="16" viewBox="0 0 16 16"><rect x="0.5" y="0.5" width="15" height="15" fill="#fff" stroke="#333" stroke-width="1"/><path d="M3.5 8.0 L6.5 11.0 L12.5 4.5" fill="none" stroke="#444" stroke-width="1.3"/></svg>
<div class="a" style="left:11px;top:819px;width:1px;height:23px;background:#e6eef8;"></div>
<div class="a" style="left:245px;top:819px;width:1px;height:23px;background:#e6eef8;"></div>
<div class="a" style="left:280px;top:819px;width:1px;height:23px;background:#e6eef8;"></div>
<div class="a" style="left:374px;top:819px;width:1px;height:23px;background:#e6eef8;"></div>
<div class="a" style="left:430px;top:819px;width:1px;height:23px;background:#e6eef8;"></div>
<div class="a" style="left:579px;top:819px;width:1px;height:23px;background:#e6eef8;"></div>
<div class="a" style="left:672px;top:819px;width:1px;height:23px;background:#e6eef8;"></div>
<div class="a" style="left:765px;top:819px;width:1px;height:23px;background:#e6eef8;"></div>
<div class="a" style="left:839px;top:819px;width:1px;height:23px;background:#e6eef8;"></div>
<div class="a" style="left:432px;top:819px;width:146px;height:23px;background:#c0c0c0;"></div>
<div class="a" style="left:-4px;top:842px;width:937px;height:1px;background:#ececec;"></div>
<div class="t" style="left:36px;top:820px;color:#000;">department_code</div>
<svg class="a" style="left:256px;top:823px" width="16" height="16" viewBox="0 0 16 16"><rect x="0.5" y="0.5" width="15" height="15" fill="#fff" stroke="#333" stroke-width="1"/></svg>
<div class="t" style="left:287px;top:820px;color:#000;">String</div>
<svg class="a" style="left:395px;top:823px" width="16" height="16" viewBox="0 0 16 16"><rect x="0.5" y="0.5" width="15" height="15" fill="#fff" stroke="#333" stroke-width="1"/><path d="M3.5 8.0 L6.5 11.0 L12.5 4.5" fill="none" stroke="#444" stroke-width="1.3"/></svg>
<div class="a" style="left:-1px;top:932px;width:26px;height:28px;background:#e1e1e1;box-sizing:border-box;border:1px solid #adadad;"></div>
<div class="a" style="left:30px;top:932px;width:26px;height:28px;background:#e1e1e1;box-sizing:border-box;border:1px solid #adadad;"></div>
<div class="a" style="left:61px;top:932px;width:26px;height:28px;background:#e1e1e1;box-sizing:border-box;border:1px solid #adadad;"></div>
<div class="a" style="left:92px;top:932px;width:26px;height:28px;background:#e1e1e1;box-sizing:border-box;border:1px solid #adadad;"></div>
<div class="a" style="left:123px;top:932px;width:26px;height:28px;background:#e1e1e1;box-sizing:border-box;border:1px solid #adadad;"></div>
<div class="a" style="left:154px;top:932px;width:26px;height:28px;background:#cccccc;box-sizing:border-box;border:1px solid #adadad;"></div>
<div class="a" style="left:185px;top:932px;width:26px;height:28px;background:#e1e1e1;box-sizing:border-box;border:1px solid #adadad;"></div>
<div class="a" style="left:216px;top:932px;width:26px;height:28px;background:#e1e1e1;box-sizing:border-box;border:1px solid #adadad;"></div>
<div class="a" style="left:247px;top:932px;width:26px;height:28px;background:#e1e1e1;box-sizing:border-box;border:1px solid #adadad;"></div>
<div class="t" style="left:948px;top:717px;color:#000;">out1</div>
<div class="a" style="left:948px;top:743px;width:940px;height:180px;background:#fff;box-sizing:border-box;border:1px solid #828790;"></div>
<div class="a" style="left:964px;top:744px;width:1px;height:27px;background:#e5e5e5;"></div>
<div class="a" style="left:1198px;top:744px;width:1px;height:27px;background:#e5e5e5;"></div>
<div class="a" style="left:1233px;top:744px;width:1px;height:27px;background:#e5e5e5;"></div>
<div class="a" style="left:1327px;top:744px;width:1px;height:27px;background:#e5e5e5;"></div>
<div class="a" style="left:1383px;top:744px;width:1px;height:27px;background:#e5e5e5;"></div>
<div class="a" style="left:1532px;top:744px;width:1px;height:27px;background:#e5e5e5;"></div>
<div class="a" style="left:1625px;top:744px;width:1px;height:27px;background:#e5e5e5;"></div>
<div class="a" style="left:1718px;top:744px;width:1px;height:27px;background:#e5e5e5;"></div>
<div class="a" style="left:1792px;top:744px;width:1px;height:27px;background:#e5e5e5;"></div>
<div class="a" style="left:1885px;top:744px;width:1px;height:27px;background:#e5e5e5;"></div>
<div class="t" style="left:971px;top:747px;color:#000;transform:scale(0.76,1.12);transform-origin:0 18px;">カラム</div>
<div class="t" style="left:1204px;top:747px;color:#000;transform:scale(0.74,1.12);transform-origin:0 18px;">キー</div>
<div class="t" style="left:1239px;top:747px;color:#000;transform:scale(0.8,1.12);transform-origin:0 18px;">タイプ</div>
<div class="t" style="left:1363px;top:747px;color:#000;">N..</div>
<div class="t" style="left:1390px;top:747px;color:#000;transform:scale(0.88,1.12);transform-origin:0 18px;">パターン(Ctrl+Space ...</div>
<div class="t" style="left:1539px;top:747px;color:#000;transform:scale(0.96,1.12);transform-origin:0 18px;">長さ</div>
<div class="t" style="left:1633px;top:747px;color:#000;transform:scale(0.97,1.12);transform-origin:0 18px;">精度</div>
<div class="t" style="left:1724px;top:747px;color:#000;transform:scale(0.76,1.12);transform-origin:0 18px;">デフォルト</div>
<div class="t" style="left:1798px;top:747px;color:#000;transform:scale(0.76,1.12);transform-origin:0 18px;">コメント</div>
<svg class="a" style="left:1336px;top:752px" width="12" height="12" viewBox="0 0 12 12"><rect x="0.5" y="0.5" width="11" height="11" fill="#fff" stroke="#7c7c60"/><path d="M2.5 6 L5 8.5 L9.5 3" fill="none" stroke="#000" stroke-width="1.3"/></svg>
<div class="a" style="left:964px;top:771px;width:1px;height:23px;background:#e6eef8;"></div>
<div class="a" style="left:1198px;top:771px;width:1px;height:23px;background:#e6eef8;"></div>
<div class="a" style="left:1233px;top:771px;width:1px;height:23px;background:#e6eef8;"></div>
<div class="a" style="left:1327px;top:771px;width:1px;height:23px;background:#e6eef8;"></div>
<div class="a" style="left:1383px;top:771px;width:1px;height:23px;background:#e6eef8;"></div>
<div class="a" style="left:1532px;top:771px;width:1px;height:23px;background:#e6eef8;"></div>
<div class="a" style="left:1625px;top:771px;width:1px;height:23px;background:#e6eef8;"></div>
<div class="a" style="left:1718px;top:771px;width:1px;height:23px;background:#e6eef8;"></div>
<div class="a" style="left:1792px;top:771px;width:1px;height:23px;background:#e6eef8;"></div>
<div class="a" style="left:1385px;top:771px;width:146px;height:23px;background:#c0c0c0;"></div>
<div class="a" style="left:949px;top:794px;width:937px;height:1px;background:#ececec;"></div>
<div class="t" style="left:989px;top:772px;color:#000;">id</div>
<svg class="a" style="left:1209px;top:775px" width="16" height="16" viewBox="0 0 16 16"><rect x="0.5" y="0.5" width="15" height="15" fill="#fff" stroke="#333" stroke-width="1"/></svg>
<div class="t" style="left:1240px;top:772px;color:#000;">Integer</div>
<svg class="a" style="left:1348px;top:775px" width="16" height="16" viewBox="0 0 16 16"><rect x="0.5" y="0.5" width="15" height="15" fill="#fff" stroke="#333" stroke-width="1"/><path d="M3.5 8.0 L6.5 11.0 L12.5 4.5" fill="none" stroke="#444" stroke-width="1.3"/></svg>
<div class="a" style="left:964px;top:795px;width:1px;height:23px;background:#e6eef8;"></div>
<div class="a" style="left:1198px;top:795px;width:1px;height:23px;background:#e6eef8;"></div>
<div class="a" style="left:1233px;top:795px;width:1px;height:23px;background:#e6eef8;"></div>
<div class="a" style="left:1327px;top:795px;width:1px;height:23px;background:#e6eef8;"></div>
<div class="a" style="left:1383px;top:795px;width:1px;height:23px;background:#e6eef8;"></div>
<div class="a" style="left:1532px;top:795px;width:1px;height:23px;background:#e6eef8;"></div>
<div class="a" style="left:1625px;top:795px;width:1px;height:23px;background:#e6eef8;"></div>
<div class="a" style="left:1718px;top:795px;width:1px;height:23px;background:#e6eef8;"></div>
<div class="a" style="left:1792px;top:795px;width:1px;height:23px;background:#e6eef8;"></div>
<div class="a" style="left:1385px;top:795px;width:146px;height:23px;background:#c0c0c0;"></div>
<div class="a" style="left:949px;top:818px;width:937px;height:1px;background:#ececec;"></div>
<div class="t" style="left:989px;top:796px;color:#000;">name</div>
<svg class="a" style="left:1209px;top:799px" width="16" height="16" viewBox="0 0 16 16"><rect x="0.5" y="0.5" width="15" height="15" fill="#fff" stroke="#333" stroke-width="1"/></svg>
<div class="t" style="left:1240px;top:796px;color:#000;">String</div>
<svg class="a" style="left:1348px;top:799px" width="16" height="16" viewBox="0 0 16 16"><rect x="0.5" y="0.5" width="15" height="15" fill="#fff" stroke="#333" stroke-width="1"/><path d="M3.5 8.0 L6.5 11.0 L12.5 4.5" fill="none" stroke="#444" stroke-width="1.3"/></svg>
<div class="a" style="left:964px;top:819px;width:1px;height:23px;background:#e6eef8;"></div>
<div class="a" style="left:1198px;top:819px;width:1px;height:23px;background:#e6eef8;"></div>
<div class="a" style="left:1233px;top:819px;width:1px;height:23px;background:#e6eef8;"></div>
<div class="a" style="left:1327px;top:819px;width:1px;height:23px;background:#e6eef8;"></div>
<div class="a" style="left:1383px;top:819px;width:1px;height:23px;background:#e6eef8;"></div>
<div class="a" style="left:1532px;top:819px;width:1px;height:23px;background:#e6eef8;"></div>
<div class="a" style="left:1625px;top:819px;width:1px;height:23px;background:#e6eef8;"></div>
<div class="a" style="left:1718px;top:819px;width:1px;height:23px;background:#e6eef8;"></div>
<div class="a" style="left:1792px;top:819px;width:1px;height:23px;background:#e6eef8;"></div>
<div class="a" style="left:1385px;top:819px;width:146px;height:23px;background:#c0c0c0;"></div>
<div class="a" style="left:949px;top:842px;width:937px;height:1px;background:#ececec;"></div>
<div class="t" style="left:989px;top:820px;color:#000;">department_code</div>
<svg class="a" style="left:1209px;top:823px" width="16" height="16" viewBox="0 0 16 16"><rect x="0.5" y="0.5" width="15" height="15" fill="#fff" stroke="#333" stroke-width="1"/></svg>
<div class="t" style="left:1240px;top:820px;color:#000;">String</div>
<svg class="a" style="left:1348px;top:823px" width="16" height="16" viewBox="0 0 16 16"><rect x="0.5" y="0.5" width="15" height="15" fill="#fff" stroke="#333" stroke-width="1"/><path d="M3.5 8.0 L6.5 11.0 L12.5 4.5" fill="none" stroke="#444" stroke-width="1.3"/></svg>
<div class="a" style="left:964px;top:843px;width:1px;height:23px;background:#e6eef8;"></div>
<div class="a" style="left:1198px;top:843px;width:1px;height:23px;background:#e6eef8;"></div>
<div class="a" style="left:1233px;top:843px;width:1px;height:23px;background:#e6eef8;"></div>
<div class="a" style="left:1327px;top:843px;width:1px;height:23px;background:#e6eef8;"></div>
<div class="a" style="left:1383px;top:843px;width:1px;height:23px;background:#e6eef8;"></div>
<div class="a" style="left:1532px;top:843px;width:1px;height:23px;background:#e6eef8;"></div>
<div class="a" style="left:1625px;top:843px;width:1px;height:23px;background:#e6eef8;"></div>
<div class="a" style="left:1718px;top:843px;width:1px;height:23px;background:#e6eef8;"></div>
<div class="a" style="left:1792px;top:843px;width:1px;height:23px;background:#e6eef8;"></div>
<div class="a" style="left:1385px;top:843px;width:146px;height:23px;background:#c0c0c0;"></div>
<div class="a" style="left:949px;top:866px;width:937px;height:1px;background:#ececec;"></div>
<div class="t" style="left:989px;top:844px;color:#000;">department_name</div>
<svg class="a" style="left:1209px;top:847px" width="16" height="16" viewBox="0 0 16 16"><rect x="0.5" y="0.5" width="15" height="15" fill="#fff" stroke="#333" stroke-width="1"/></svg>
<div class="t" style="left:1240px;top:844px;color:#000;">String</div>
<svg class="a" style="left:1348px;top:847px" width="16" height="16" viewBox="0 0 16 16"><rect x="0.5" y="0.5" width="15" height="15" fill="#fff" stroke="#333" stroke-width="1"/><path d="M3.5 8.0 L6.5 11.0 L12.5 4.5" fill="none" stroke="#444" stroke-width="1.3"/></svg>
<div class="a" style="left:952px;top:932px;width:26px;height:28px;background:#e1e1e1;box-sizing:border-box;border:1px solid #adadad;"></div>
<div class="a" style="left:983px;top:932px;width:26px;height:28px;background:#cccccc;box-sizing:border-box;border:1px solid #adadad;"></div>
<div class="a" style="left:1014px;top:932px;width:26px;height:28px;background:#cccccc;box-sizing:border-box;border:1px solid #adadad;"></div>
<div class="a" style="left:1045px;top:932px;width:26px;height:28px;background:#cccccc;box-sizing:border-box;border:1px solid #adadad;"></div>
<div class="a" style="left:1076px;top:932px;width:26px;height:28px;background:#cccccc;box-sizing:border-box;border:1px solid #adadad;"></div>
<div class="a" style="left:1107px;top:932px;width:26px;height:28px;background:#cccccc;box-sizing:border-box;border:1px solid #adadad;"></div>
<div class="a" style="left:1138px;top:932px;width:26px;height:28px;background:#e1e1e1;box-sizing:border-box;border:1px solid #adadad;"></div>
<div class="a" style="left:1169px;top:932px;width:26px;height:28px;background:#e1e1e1;box-sizing:border-box;border:1px solid #adadad;"></div>
<div class="a" style="left:1200px;top:932px;width:26px;height:28px;background:#e1e1e1;box-sizing:border-box;border:1px solid #adadad;"></div>
<svg class="a" style="left:6px;top:940px" width="13" height="13" viewBox="0 0 13 13"><path d="M4.5 0.5 H8 V4.5 H11.5 V8 H8 V11.5 H4.5 V8 H0.5 V4.5 H4.5 Z" fill="url(#gp)" stroke="#2f8040" stroke-width="1"/></svg>
<svg class="a" style="left:36px;top:940px" width="14" height="13" viewBox="0 0 14 13"><path d="M2.4 2.2 L11.2 10.8 M11.2 2.2 L2.4 10.8" stroke="#d8404e" stroke-width="3.8" stroke-linecap="round"/><path d="M2.4 2.2 L11.2 10.8 M11.2 2.2 L2.4 10.8" stroke="#f26874" stroke-width="2" stroke-linecap="round"/></svg>
<svg class="a" style="left:67px;top:938px" width="14" height="16" viewBox="0 0 14 16"><path d="M7 1 L12.6 6.9 H9.6 V14.3 H4.4 V6.9 H1.4 Z" fill="url(#ga)" stroke="#c98a12" stroke-width="1.1" stroke-linejoin="round"/></svg>
<svg class="a" style="left:98px;top:938px" width="14" height="16" viewBox="0 0 14 16"><path d="M7 14.6 L12.6 8.1 H9.6 V1 H4.4 V8.1 H1.4 Z" fill="url(#ga)" stroke="#c98a12" stroke-width="1.1" stroke-linejoin="round"/></svg>
<svg class="a" style="left:128px;top:938px" width="16" height="16" viewBox="0 0 16 16"><path d="M1 1.5 h7 l2 2 v10 h-9 z" fill="#e8eefa" stroke="#b8a878"/><path d="M5.5 3.5 h7 l2.5 2.5 v9.5 h-9.5 z" fill="#f0f4fc" stroke="#b8a878"/><path d="M7 7 h6 M7 9 h6 M7 11 h6 M7 13 h5 M2.5 5 h2 M2.5 7 h2 M2.5 9 h2 M2.5 11 h2" stroke="#3c5cb0" stroke-width="0.9"/></svg>
<svg class="a" style="left:159px;top:938px" width="16" height="16" viewBox="0 0 16 16"><path d="M2 3 h10 v12 h-10 z" fill="none" stroke="#b4b4b4"/><path d="M5 1.5 h4 v2 h-4 z" fill="none" stroke="#b4b4b4"/><path d="M7 7 h6 v8 h-6 z" fill="#cfcfcf" stroke="#b4b4b4"/><path d="M8.5 9.5 h3 M8.5 11.5 h3 M8.5 13.5 h3" stroke="#b4b4b4"/></svg>
<svg class="a" style="left:190px;top:938px" width="16" height="16" viewBox="0 0 16 16"><path d="M0.5 2.5 h5 l1.5 1.5 h6.5 v9 h-13 z" fill="#ffd990" stroke="#d08a28"/><path d="M6.5 8 v4.5 h5 v2.5 l3.5 -3.5 l-3.5 -3.5 v2.5 h-3 v-2.5 z" fill="#a8d8c0" stroke="#1a5aa0" stroke-width="1"/></svg>
<svg class="a" style="left:221px;top:938px" width="16" height="16" viewBox="0 0 16 16"><path d="M0.5 2.5 h5 l1.5 1.5 h6.5 v9 h-13 z" fill="#ffd990" stroke="#d08a28"/><path d="M8 15.5 v-4 h-2.5 l4 -4.5 l4 4.5 h-2.5 v4 z" fill="#a8d8c0" stroke="#1a5aa0" stroke-width="1"/></svg>
<svg class="a" style="left:252px;top:938px" width="16" height="16" viewBox="0 0 16 16"><path d="M1.5 1.2 h13 l1 1 v12.3 l-1 1 h-13 l-1 -1 v-12.3 z" fill="#3f4cc0" stroke="#2a3490" stroke-width="0.8"/><rect x="3" y="0.8" width="10" height="7" fill="#fff"/><path d="M4.5 3 h7 M4.5 5 h7" stroke="#9a9a9a" stroke-width="0.8"/><rect x="4" y="10" width="8" height="5.3" fill="#e8e8f0"/><rect x="5" y="11" width="2" height="4.3" fill="#2a3490"/></svg>
<svg class="a" style="left:959px;top:940px" width="13" height="13" viewBox="0 0 13 13"><path d="M4.5 0.5 H8 V4.5 H11.5 V8 H8 V11.5 H4.5 V8 H0.5 V4.5 H4.5 Z" fill="url(#gp)" stroke="#2f8040" stroke-width="1"/></svg>
<svg class="a" style="left:989px;top:940px" width="13" height="13" viewBox="0 0 13 13"><path d="M2 2 L11 11 M11 2 L2 11" stroke="#bdbdbd" stroke-width="3.4" stroke-linecap="round"/></svg>
<svg class="a" style="left:1020px;top:938px" width="14" height="16" viewBox="0 0 14 16"><path d="M7 1 L12.6 6.9 H9.6 V14.3 H4.4 V6.9 H1.4 Z" fill="#f6f6f6" stroke="#a9a9a9" stroke-width="1.1" stroke-linejoin="round"/></svg>
<svg class="a" style="left:1051px;top:938px" width="14" height="16" viewBox="0 0 14 16"><path d="M7 14.6 L12.6 8.1 H9.6 V1 H4.4 V8.1 H1.4 Z" fill="#f6f6f6" stroke="#a9a9a9" stroke-width="1.1" stroke-linejoin="round"/></svg>
<svg class="a" style="left:1081px;top:938px" width="16" height="16" viewBox="0 0 16 16"><path d="M1 1.5 h7 l2 2 v10 h-9 z" fill="#f0f0f0" stroke="#c0c0c0"/><path d="M5.5 3.5 h7 l2.5 2.5 v9.5 h-9.5 z" fill="#f4f4f4" stroke="#c0c0c0"/><path d="M7 7 h6 M7 9 h6 M7 11 h6 M7 13 h5" stroke="#c4c4c4" stroke-width="0.9"/></svg>
<svg class="a" style="left:1112px;top:938px" width="16" height="16" viewBox="0 0 16 16"><path d="M2 3 h10 v12 h-10 z" fill="none" stroke="#b4b4b4"/><path d="M5 1.5 h4 v2 h-4 z" fill="none" stroke="#b4b4b4"/><path d="M7 7 h6 v8 h-6 z" fill="#cfcfcf" stroke="#b4b4b4"/><path d="M8.5 9.5 h3 M8.5 11.5 h3 M8.5 13.5 h3" stroke="#b4b4b4"/></svg>
<svg class="a" style="left:1143px;top:938px" width="16" height="16" viewBox="0 0 16 16"><path d="M0.5 2.5 h5 l1.5 1.5 h6.5 v9 h-13 z" fill="#ffd990" stroke="#d08a28"/><path d="M6.5 8 v4.5 h5 v2.5 l3.5 -3.5 l-3.5 -3.5 v2.5 h-3 v-2.5 z" fill="#a8d8c0" stroke="#1a5aa0" stroke-width="1"/></svg>
<svg class="a" style="left:1174px;top:938px" width="16" height="16" viewBox="0 0 16 16"><path d="M0.5 2.5 h5 l1.5 1.5 h6.5 v9 h-13 z" fill="#ffd990" stroke="#d08a28"/><path d="M8 15.5 v-4 h-2.5 l4 -4.5 l4 4.5 h-2.5 v4 z" fill="#a8d8c0" stroke="#1a5aa0" stroke-width="1"/></svg>
<svg class="a" style="left:1205px;top:938px" width="16" height="16" viewBox="0 0 16 16"><path d="M1.5 1.2 h13 l1 1 v12.3 l-1 1 h-13 l-1 -1 v-12.3 z" fill="#3f4cc0" stroke="#2a3490" stroke-width="0.8"/><rect x="3" y="0.8" width="10" height="7" fill="#fff"/><path d="M4.5 3 h7 M4.5 5 h7" stroke="#9a9a9a" stroke-width="0.8"/><rect x="4" y="10" width="8" height="5.3" fill="#e8e8f0"/><rect x="5" y="11" width="2" height="4.3" fill="#2a3490"/></svg>
<div class="a" style="left:0px;top:969px;width:1893px;height:2px;background:#fff;"></div>
<div class="a" style="left:0px;top:971px;width:1893px;height:1px;background:#a0a0a0;"></div>
<div class="a" style="left:1553px;top:978px;width:98px;height:30px;background:#e1e1e1;box-sizing:border-box;border:1px solid #adadad;"></div>
<div class="t" style="left:1587px;top:981px;color:#000;transform:scale(1.0,1);transform-origin:0 18px;">適用</div>
<div class="a" style="left:1673px;top:978px;width:98px;height:30px;background:#e1e1e1;box-sizing:border-box;border:1px solid #adadad;"></div>
<div class="t" style="left:1712px;top:981px;color:#000;">OK</div>
<div class="a" style="left:1793px;top:978px;width:98px;height:30px;background:#e1e1e1;box-sizing:border-box;border:1px solid #adadad;"></div>
<div class="t" style="left:1813px;top:981px;color:#000;transform:scale(0.78,1.12);transform-origin:0 18px;">キャンセル</div>
</body></html>
